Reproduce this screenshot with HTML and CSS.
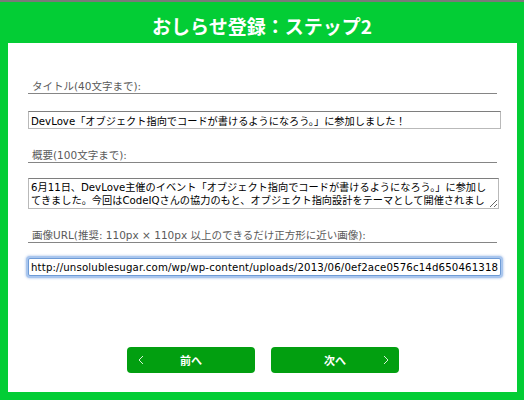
FILE: index.html
```html
<!DOCTYPE html>
<html lang="ja">
<head>
<meta charset="utf-8">
<title>おしらせ登録：ステップ2</title>
<link rel="stylesheet" href="styles.css">
</head>
<body>
<div class="topline"></div>
<header class="title">おしらせ登録：ステップ2</header>
<main class="panel">
  <div class="field">
    <label class="label">タイトル(40文字まで):</label>
    <input class="text" type="text" value="DevLove「オブジェクト指向でコードが書けるようになろう。」に参加しました！">
  </div>
  <div class="field">
    <label class="label">概要(100文字まで):</label>
    <textarea class="area">6月11日、DevLove主催のイベント「オブジェクト指向でコードが書けるようになろう。」に参加してきました。今回はCodeIQさんの協力のもと、オブジェクト指向設計をテーマとして開催されました。</textarea>
  </div>
  <div class="field">
    <label class="label">画像URL(推奨: 110px × 110px 以上のできるだけ正方形に近い画像):</label>
    <input class="text url" type="text" value="http://unsolublesugar.com/wp/wp-content/uploads/2013/06/0ef2ace0576c14d650461318bd3a5f2e.png">
  </div>
  <div class="buttons">
    <button class="btn" type="button">
      <svg class="chev" width="6" height="10" viewBox="0 0 6 10"><polyline points="5,1 1,5 5,9" fill="none" stroke="#d6f0d6" stroke-width="1"/></svg>
      <span class="btn-label">前へ</span>
      <span></span>
    </button>
    <button class="btn" type="button">
      <span></span>
      <span class="btn-label">次へ</span>
      <svg class="chev right" width="6" height="10" viewBox="0 0 6 10"><polyline points="1,1 5,5 1,9" fill="none" stroke="#d6f0d6" stroke-width="1"/></svg>
    </button>
  </div>
</main>
</body>
</html>
```

FILE: styles.css
```css
html, body {
  margin: 0;
  padding: 0;
  background: #03cd35;
  height: 400px;
  overflow: hidden;
}
body {
  font-family: "DejaVu Sans", "Noto Sans CJK JP", sans-serif;
}
.topline {
  height: 2px;
  background: #7a7a7a;
}
.title {
  height: 41px;
  box-sizing: border-box;
  padding-top: 7px;
  line-height: 34px;
  text-align: center;
  color: #fff;
  font-family: "Noto Sans CJK JP", sans-serif;
  font-weight: 700;
  font-size: 19px;
}
.panel {
  margin: 0 7px 0 8px;
  height: 349px;
  box-sizing: border-box;
  background: #fff;
  padding: 36px 20px 0 20px;
}
.field {
  display: flex;
  flex-direction: column;
  align-items: flex-start;
}
.field + .field {
  margin-top: 19px;
}
.label {
  display: block;
  width: 469px;
  box-sizing: border-box;
  padding-left: 4px;
  font-size: 10.5px;
  line-height: 14px;
  color: #5a5a5a;
  border-bottom: 1px solid #858585;
}
.text {
  margin: 17px 0 0 0;
  width: 473px;
  height: 18px;
  box-sizing: border-box;
  padding: 0 2px;
  border: 1px solid #b9b9b9;
  border-top-color: #7e7e7e;
  border-radius: 0;
  background: #fff;
  color: #000;
  font-family: "DejaVu Sans", "Noto Sans CJK JP", sans-serif;
  font-size: 10.2px;
  outline: none;
}
.area {
  margin: 15px 0 0 0;
  width: 471px;
  height: 31px;
  box-sizing: border-box;
  padding: 2px 2px;
  border: 1px solid #b9b9b9;
  border-top-color: #7e7e7e;
  background: #fff;
  color: #000;
  font-family: "DejaVu Sans", "Noto Sans CJK JP", sans-serif;
  font-size: 10.2px;
  line-height: 13px;
  overflow: hidden;
  resize: both;
  outline: none;
}
.url {
  margin-top: 15px;
  letter-spacing: 0.15px;
  border-color: #6e9bd6;
  border-radius: 2px;
  box-shadow: 0 0 0 2px #a9c6ee, 0 0 2px 3px rgba(120, 160, 220, 0.35);
}
.buttons {
  margin-top: 71px;
  display: flex;
  justify-content: center;
  gap: 16px;
}
.btn {
  width: 128px;
  height: 26px;
  border: none;
  border-radius: 4px;
  background: #029f10;
  color: #fff;
  padding: 0 10px 0 11px;
  display: grid;
  grid-template-columns: 20px 1fr 20px;
  align-items: center;
  font-family: "Noto Sans CJK JP", sans-serif;
  font-weight: 700;
  font-size: 11px;
}
.btn-label {
  text-align: center;
}
.chev {
  display: block;
}
.chev.right {
  justify-self: end;
}
```
